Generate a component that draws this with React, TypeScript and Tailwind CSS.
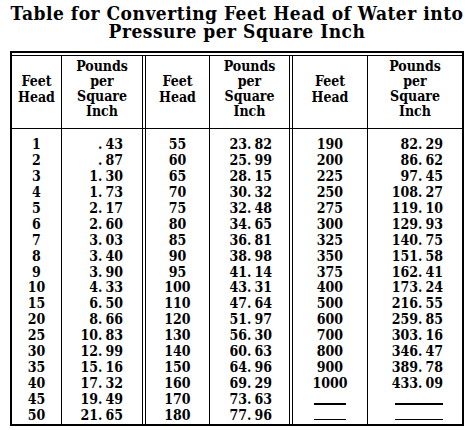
import React from "react";

const FONT = { fontFamily: '"DejaVu Serif Condensed", "DejaVu Serif", "Liberation Serif", serif' };

type Row = [string, string];

const g1: Row[] = [
  ["1", ".43"], ["2", ".87"], ["3", "1.30"], ["4", "1.73"], ["5", "2.17"], ["6", "2.60"],
  ["7", "3.03"], ["8", "3.40"], ["9", "3.90"], ["10", "4.33"], ["15", "6.50"], ["20", "8.66"],
  ["25", "10.83"], ["30", "12.99"], ["35", "15.16"], ["40", "17.32"], ["45", "19.49"], ["50", "21.65"],
];
const g2: Row[] = [
  ["55", "23.82"], ["60", "25.99"], ["65", "28.15"], ["70", "30.32"], ["75", "32.48"], ["80", "34.65"],
  ["85", "36.81"], ["90", "38.98"], ["95", "41.14"], ["100", "43.31"], ["110", "47.64"], ["120", "51.97"],
  ["130", "56.30"], ["140", "60.63"], ["150", "64.96"], ["160", "69.29"], ["170", "73.63"], ["180", "77.96"],
];
const g3: Row[] = [
  ["190", "82.29"], ["200", "86.62"], ["225", "97.45"], ["250", "108.27"], ["275", "119.10"], ["300", "129.93"],
  ["325", "140.75"], ["350", "151.58"], ["375", "162.41"], ["400", "173.24"], ["500", "216.55"], ["600", "259.85"],
  ["700", "303.16"], ["800", "346.47"], ["900", "389.78"], ["1000", "433.09"], ["", ""], ["", ""],
];

function Val({ v }: { v: string }) {
  const [a, b] = v.split(".");
  return (
    <span>
      {a}.<span className="ml-[3px]">{b}</span>
    </span>
  );
}

function FeetCol({ rows, dashW }: { rows: Row[]; dashW: string }) {
  return (
    <div className="flex flex-col items-center pt-[8px]">
      {rows.map((r, i) => (
        <div key={i} className="h-[15.95px] leading-[15.95px] flex justify-center">
          {r[0] === "" ? <div className={`${dashW} h-[1.5px] bg-black mt-[11px]`} /> : r[0]}
        </div>
      ))}
    </div>
  );
}

function PsiCol({ rows, pr, dashW }: { rows: Row[]; pr: string; dashW: string }) {
  return (
    <div className={`flex flex-col items-end pt-[8px] ${pr}`}>
      {rows.map((r, i) => (
        <div key={i} className="h-[15.95px] leading-[15.95px] flex justify-end">
          {r[1] === "" ? <div className={`${dashW} h-[1.5px] bg-black mt-[11px]`} /> : <Val v={r[1]} />}
        </div>
      ))}
    </div>
  );
}

function FeetHead() {
  return (
    <div className="pt-[18px] text-center leading-[15.5px]">
      <div>Feet</div>
      <div>Head</div>
    </div>
  );
}

function PoundsHead() {
  return (
    <div className="pt-[3px] text-center leading-[15px]">
      <div>Pounds</div>
      <div>per</div>
      <div>Square</div>
      <div>Inch</div>
    </div>
  );
}

export default function App() {
  return (
    <div className="w-[474px] h-[430px] bg-white text-black font-bold overflow-hidden" style={FONT}>
      <div className="pt-[4px] text-center text-[19px] leading-[18px] tracking-[0.5px]">
        <div>Table for Converting Feet Head of Water into</div>
        <div>Pressure per Square Inch</div>
      </div>
      <div className="mx-[10px] mt-[11px] border-2 border-black">
        <div className="mt-[2px] border-t border-black">
          {/* header */}
          <div className="flex h-[73px] border-b border-black text-[14px]">
            <div className="w-[50px] border-r border-black"><FeetHead /></div>
            <div className="w-[81px] border-r border-black"><PoundsHead /></div>
            <div className="w-[2px]" />
            <div className="w-[65px] border-l border-r border-black"><FeetHead /></div>
            <div className="w-[80px] border-r border-black"><PoundsHead /></div>
            <div className="w-[2px]" />
            <div className="w-[76px] border-l border-r border-black"><FeetHead /></div>
            <div className="flex-1"><PoundsHead /></div>
          </div>
          {/* body */}
          <div className="flex text-[14px]">
            <div className="w-[50px] border-r border-black"><FeetCol rows={g1} dashW="w-[32px]" /></div>
            <div className="w-[81px] border-r border-black"><PsiCol rows={g1} pr="pr-[19px]" dashW="w-[48px]" /></div>
            <div className="w-[2px]" />
            <div className="w-[65px] border-l border-r border-black"><FeetCol rows={g2} dashW="w-[32px]" /></div>
            <div className="w-[80px] border-r border-black"><PsiCol rows={g2} pr="pr-[17px]" dashW="w-[48px]" /></div>
            <div className="w-[2px]" />
            <div className="w-[76px] border-l border-r border-black"><FeetCol rows={g3} dashW="w-[32px]" /></div>
            <div className="flex-1"><PsiCol rows={g3} pr="pr-[19px]" dashW="w-[48px]" /></div>
          </div>
        </div>
      </div>
    </div>
  );
}
